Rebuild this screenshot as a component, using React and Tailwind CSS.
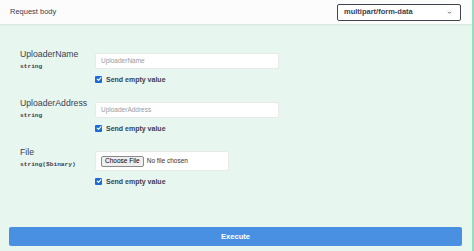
import React from "react";

const Check = () => (
  <span className="flex h-[7px] w-[7px] shrink-0 items-center justify-center rounded-[1px] bg-[#1c6bd6]">
    <svg viewBox="0 0 10 10" className="h-[6px] w-[6px]" fill="none">
      <path d="M2 5.2 4.2 7.3 8.2 2.6" stroke="#fff" strokeWidth="1.8" strokeLinecap="round" strokeLinejoin="round" />
    </svg>
  </span>
);

const SendEmpty = () => (
  <div className="mt-[6px] flex h-[8px] items-center gap-[4px]">
    <Check />
    <span className="text-[7px] font-bold leading-none text-[#3b4151]">Send empty value</span>
  </div>
);

const Label = ({ name, type }) => (
  <div className="w-[75px] shrink-0">
    <div className="text-[8.7px] leading-[10px] text-[#3b4151]">{name}</div>
    <div className="mt-[4px] font-['Liberation_Mono',monospace] text-[6.2px] font-bold leading-[7px] text-[#3b4151]">
      {type}
    </div>
  </div>
);

const TextParam = ({ name }) => (
  <div className="flex">
    <Label name={name} type="string" />
    <div className="mt-[4px]">
      <div className="flex h-[16px] w-[184px] items-center rounded-[2px] border border-[#e9e9e9] bg-white px-[5px] text-[6.5px] text-[#9a9a9a]">
        {name}
      </div>
      <SendEmpty />
    </div>
  </div>
);

export default function App() {
  const params = ["UploaderName", "UploaderAddress"];

  return (
    <div className="h-[251px] w-[474px] overflow-hidden border-r-2 border-[#93dfc0] bg-[#e7f6ef] font-['Liberation_Sans',Arial,sans-serif]">
      <div className="flex h-[24px] items-center justify-between bg-[#fcfcfc] pl-[10px] pr-[11px] shadow-[0_1px_2px_rgba(0,0,0,0.08)]">
        <span className="text-[7.5px] text-[#3b4151]">Request body</span>
        <div className="flex h-[17px] w-[124px] items-center justify-between rounded-[2px] border border-[#41444e] bg-white pl-[6px] pr-[8px]">
          <span className="text-[7.5px] font-bold text-[#3b4151]">multipart/form-data</span>
          <svg viewBox="0 0 10 10" className="h-[5px] w-[5px]" fill="none">
            <path d="M2 3.5 5 6.5 8 3.5" stroke="#3b4151" strokeWidth="1.6" />
          </svg>
        </div>
      </div>

      <div className="flex flex-col gap-[15px] pl-[20px] pt-[25px]">
        {params.map((p) => (
          <TextParam key={p} name={p} />
        ))}
        <div className="flex">
          <Label name="File" type="string($binary)" />
          <div className="mt-[4px]">
            <div className="flex h-[20px] w-[134px] items-center gap-[3px] rounded-[2px] border border-[#e9e9e9] bg-white px-[5px]">
              <span className="flex h-[11px] items-center rounded-[2px] border border-[#8a8a8a] bg-[#efefef] px-[3px] text-[6.5px] leading-none text-black">
                Choose File
              </span>
              <span className="text-[6.5px] text-[#333]">No file chosen</span>
            </div>
            <SendEmpty />
          </div>
        </div>
      </div>

      <div className="px-[9px] pt-[42px]">
        <button className="flex h-[19px] w-[453px] items-center justify-center rounded-[2px] bg-[#4990e2] text-[7.6px] font-bold text-white">
          Execute
        </button>
      </div>
    </div>
  );
}
